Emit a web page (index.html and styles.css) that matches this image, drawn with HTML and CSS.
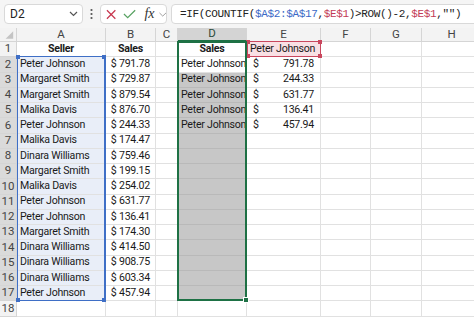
FILE: index.html
```html
<!DOCTYPE html>
<html>
<head>
<meta charset="utf-8">
<link rel="stylesheet" href="styles.css">
</head>
<body>
<div class="toolbar">
  <div class="namebox"><span>D2</span><svg width="9" height="6" viewBox="0 0 9 6"><path d="M1 1l3.5 3.5L8 1" stroke="#555" fill="none" stroke-width="1.2"/></svg></div>
  <div class="dots"><svg width="3" height="12" viewBox="0 0 3 12"><circle cx="1.5" cy="2" r="1.1"/><circle cx="1.5" cy="6" r="1.1"/><circle cx="1.5" cy="10" r="1.1"/></svg></div>
  <div class="fbtns">
    <svg width="11" height="11" viewBox="0 0 11 11"><path d="M1 1L10 10M10 1L1 10" stroke="#c8374f" stroke-width="1.3"/></svg>
    <svg width="14" height="10" viewBox="0 0 14 10"><path d="M1 5l4 4L13 1" stroke="#58a262" stroke-width="1.3" fill="none"/></svg>
    <span class="fx">fx</span>
    <svg width="8" height="5" viewBox="0 0 8 5"><path d="M.5 .8l3.5 3.4L7.5 .8" stroke="#9a9a9a" fill="none"/></svg>
  </div>
  <div class="formula">=IF(COUNTIF(<span class="fb">$A$2:$A$17</span>,<span class="fr">$E$1</span>)&gt;ROW()-2,<span class="fr">$E$1</span>,"")</div>
</div>

<div class="sheet-wrap">
<div class="sheet">
  <div class="corner"><svg width="17" height="14" viewBox="0 0 17 14"><polygon points="14,3 14,11 6,11" fill="#c4c4c4"/></svg></div>
  <div class="ch">A</div><div class="ch">B</div><div class="ch">C</div><div class="ch sd">D</div><div class="ch">E</div><div class="ch">F</div><div class="ch">G</div><div class="ch">H</div>

  <div class="rh">1</div><div class="c ctr b">Seller</div><div class="c ctr b">Sales</div><div class="c"></div><div class="c ctr b">Sales</div><div class="c re">Peter Johnson</div><div class="c"></div><div class="c"></div><div class="c"></div>

  <div class="rh s">2</div><div class="c ra">Peter Johnson</div><div class="c num">$ 791.78</div><div class="c"></div><div class="c">Peter Johnson</div><div class="c acc"><span>$</span><span>791.78</span></div><div class="c"></div><div class="c"></div><div class="c"></div>
  <div class="rh s">3</div><div class="c ra">Margaret Smith</div><div class="c num">$ 729.87</div><div class="c"></div><div class="c g">Peter Johnson</div><div class="c acc"><span>$</span><span>244.33</span></div><div class="c"></div><div class="c"></div><div class="c"></div>
  <div class="rh s">4</div><div class="c ra">Margaret Smith</div><div class="c num">$ 879.54</div><div class="c"></div><div class="c g">Peter Johnson</div><div class="c acc"><span>$</span><span>631.77</span></div><div class="c"></div><div class="c"></div><div class="c"></div>
  <div class="rh s">5</div><div class="c ra">Malika Davis</div><div class="c num">$ 876.70</div><div class="c"></div><div class="c g">Peter Johnson</div><div class="c acc"><span>$</span><span>136.41</span></div><div class="c"></div><div class="c"></div><div class="c"></div>
  <div class="rh s">6</div><div class="c ra">Peter Johnson</div><div class="c num">$ 244.33</div><div class="c"></div><div class="c g">Peter Johnson</div><div class="c acc"><span>$</span><span>457.94</span></div><div class="c"></div><div class="c"></div><div class="c"></div>
  <div class="rh s">7</div><div class="c ra">Malika Davis</div><div class="c num">$ 174.47</div><div class="c"></div><div class="c g"></div><div class="c"></div><div class="c"></div><div class="c"></div><div class="c"></div>
  <div class="rh s">8</div><div class="c ra">Dinara Williams</div><div class="c num">$ 759.46</div><div class="c"></div><div class="c g"></div><div class="c"></div><div class="c"></div><div class="c"></div><div class="c"></div>
  <div class="rh s">9</div><div class="c ra">Margaret Smith</div><div class="c num">$ 199.15</div><div class="c"></div><div class="c g"></div><div class="c"></div><div class="c"></div><div class="c"></div><div class="c"></div>
  <div class="rh s">10</div><div class="c ra">Malika Davis</div><div class="c num">$ 254.02</div><div class="c"></div><div class="c g"></div><div class="c"></div><div class="c"></div><div class="c"></div><div class="c"></div>
  <div class="rh s">11</div><div class="c ra">Peter Johnson</div><div class="c num">$ 631.77</div><div class="c"></div><div class="c g"></div><div class="c"></div><div class="c"></div><div class="c"></div><div class="c"></div>
  <div class="rh s">12</div><div class="c ra">Peter Johnson</div><div class="c num">$ 136.41</div><div class="c"></div><div class="c g"></div><div class="c"></div><div class="c"></div><div class="c"></div><div class="c"></div>
  <div class="rh s">13</div><div class="c ra">Margaret Smith</div><div class="c num">$ 174.30</div><div class="c"></div><div class="c g"></div><div class="c"></div><div class="c"></div><div class="c"></div><div class="c"></div>
  <div class="rh s">14</div><div class="c ra">Dinara Williams</div><div class="c num">$ 414.50</div><div class="c"></div><div class="c g"></div><div class="c"></div><div class="c"></div><div class="c"></div><div class="c"></div>
  <div class="rh s">15</div><div class="c ra">Dinara Williams</div><div class="c num">$ 908.75</div><div class="c"></div><div class="c g"></div><div class="c"></div><div class="c"></div><div class="c"></div><div class="c"></div>
  <div class="rh s">16</div><div class="c ra">Dinara Williams</div><div class="c num">$ 603.34</div><div class="c"></div><div class="c g"></div><div class="c"></div><div class="c"></div><div class="c"></div><div class="c"></div>
  <div class="rh s">17</div><div class="c ra">Peter Johnson</div><div class="c num">$ 457.94</div><div class="c"></div><div class="c g"></div><div class="c"></div><div class="c"></div><div class="c"></div><div class="c"></div>
  <div class="rh">18</div><div class="c"></div><div class="c"></div><div class="c"></div><div class="c"></div><div class="c"></div><div class="c"></div><div class="c"></div><div class="c"></div>
</div>

<div class="overlay">
  <div class="rng rng-a"><i class="k tl"></i><i class="k tr"></i><i class="k bl"></i><i class="k br"></i></div>
  <div class="rng rng-e"><i class="k tl"></i><i class="k tr"></i><i class="k bl"></i><i class="k br"></i></div>
  <div class="rng rng-d"><i class="fill"></i></div>
</div>
</div>
</body>
</html>
```

FILE: styles.css
```css
* { box-sizing: border-box; }
html, body { margin: 0; padding: 0; background: #fff; }
body {
  width: 474px;
  height: 319px;
  overflow: hidden;
  font-family: Roboto, "Liberation Sans", sans-serif;
  color: #222;
}

/* ---------- formula toolbar ---------- */
.toolbar {
  height: 28px;
  background: #f5f5f5;
  display: flex;
  align-items: flex-start;
  padding: 4px 0 0 4px;
}
.namebox {
  width: 79px;
  height: 20px;
  background: #fff;
  border: 1px solid #d9d9d9;
  border-radius: 4px;
  display: flex;
  align-items: center;
  justify-content: space-between;
  padding: 0 4px 0 5px;
  font-size: 12px;
  color: #222;
}
.dots {
  width: 17px;
  height: 20px;
  display: flex;
  align-items: center;
  justify-content: center;
  fill: #555;
}
.fbtns {
  width: 67px;
  height: 20px;
  background: #fff;
  border: 1px solid #d9d9d9;
  border-radius: 4px;
  display: flex;
  align-items: center;
  gap: 7px;
  padding: 0 0 0 5px;
}
.fx {
  font-family: "Liberation Serif", serif;
  font-style: italic;
  font-size: 14px;
  color: #333;
  margin-left: 1px;
  margin-right: -3px;
}
.formula {
  flex: 1;
  height: 20px;
  margin-left: 4px;
  margin-right: -6px;
  background: #fff;
  border: 1px solid #d9d9d9;
  border-radius: 4px;
  display: flex;
  align-items: center;
  padding-left: 8px;
  font-family: "Liberation Mono", monospace;
  font-size: 11px;
  letter-spacing: -0.35px;
  color: #222;
  white-space: nowrap;
}
.fb { color: #3a68c6; }
.fr { color: #c23a55; }

/* ---------- sheet grid ---------- */
.sheet-wrap { position: relative; }
.sheet, .overlay {
  display: grid;
  grid-template-columns: 17px 89px 50px 22px 69px 74px 50px 51px 60px;
  grid-template-rows: 14px repeat(18, 15.25px);
}
.overlay {
  position: absolute;
  inset: 0;
  pointer-events: none;
}
.corner {
  background: #f3f3f3;
  border-right: 1px solid #d5d5d5;
  border-bottom: 1px solid #d5d5d5;
  display: flex;
}
.ch {
  background: #f3f3f3;
  border-right: 1px solid #d5d5d5;
  border-bottom: 1px solid #d5d5d5;
  display: flex;
  align-items: center;
  justify-content: center;
  font-family: Roboto, sans-serif;
  font-size: 11.5px;
  line-height: 1;
  color: #444;
}
.ch.sd {
  background: #d4d4d4;
  border-bottom: 2px solid #1e7145;
  color: #2b4a38;
}
.rh {
  background: #f3f3f3;
  border-right: 1px solid #d5d5d5;
  border-bottom: 1px solid #d5d5d5;
  display: flex;
  align-items: center;
  justify-content: center;
  font-family: Roboto, sans-serif;
  font-size: 11.5px;
  line-height: 1;
  color: #444;
}
.rh.s { background: #dadada; color: #444; }

.c {
  border-right: 1px solid #e1e1e1;
  border-bottom: 1px solid #e1e1e1;
  display: flex;
  align-items: center;
  padding: 0 3px;
  font-size: 10.6px;
  line-height: 1.2;
  letter-spacing: -0.25px;
  white-space: nowrap;
  overflow: hidden;
  color: #1a1a1a;
}
.ctr { justify-content: center; }
.b { font-weight: bold; }
.num { justify-content: flex-end; padding-right: 5px; }
.acc { justify-content: space-between; padding: 0 6px 0 6px; }
.ra { background: #e9eef8; }
.re { background: #f9e0e4; }
.g { background: #c7c7c7; border-bottom-color: #b9b9b9; }

/* ---------- overlays: formula references & selection ---------- */
.rng { position: relative; }
.rng-a {
  grid-column: 2;
  grid-row: 3 / 19;
  margin: -1px 0 0 0;
  border: 1px solid #3f6fc6;
  border-right-width: 2px;
}
.rng-e {
  grid-column: 6;
  grid-row: 2;
  margin: -1px 0 0 0;
  border: 1px solid #c9475e;
}
.rng-a .k { background: #3f6fc6; }
.rng-e .k { background: #c9475e; }
.k {
  position: absolute;
  width: 4px;
  height: 4px;
}
.k.tl { left: -2px; top: -2px; }
.k.tr { right: -2px; top: -2px; }
.k.bl { left: -2px; bottom: -2px; }
.k.br { right: -2px; bottom: -2px; }

.rng-d {
  grid-column: 5;
  grid-row: 2 / 19;
  margin: -1px 0 0 -1px;
  border: 2px solid #1e7145;
}
.rng-d .fill {
  position: absolute;
  right: -4px;
  bottom: -4px;
  width: 6px;
  height: 6px;
  background: #1e7145;
  border: 1px solid #fff;
}
```
